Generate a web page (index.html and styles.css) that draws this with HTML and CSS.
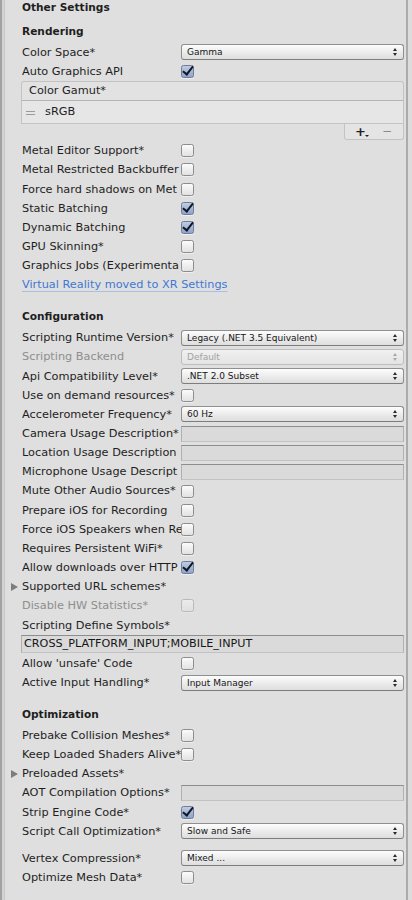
FILE: index.html
```html
<!DOCTYPE html>
<html>
<head>
<meta charset="utf-8">
<link rel="stylesheet" href="styles.css">
</head>
<body>
<div class="panel">
  <div class="edge-left"></div>
  <div class="content">
    <div class="title">Other Settings</div>

    <div class="section-head first">Rendering</div>
    <div class="row"><span class="label">Color Space*</span><div class="dropdown"><span>Gamma</span><i class="arrows"></i></div></div>
    <div class="row"><span class="label">Auto Graphics API</span><span class="check on"></span></div>

    <div class="list">
      <div class="list-head">Color Gamut*</div>
      <div class="list-body"><span class="handle"></span><span class="item">sRGB</span></div>
      <div class="list-foot"><span class="plus">+<i class="tri"></i></span><span class="minus">−</span></div>
    </div>

    <div class="row"><span class="label">Metal Editor Support*</span><span class="check"></span></div>
    <div class="row"><span class="label">Metal Restricted Backbuffer</span><span class="check"></span></div>
    <div class="row"><span class="label">Force hard shadows on Met</span><span class="check"></span></div>
    <div class="row"><span class="label">Static Batching</span><span class="check on"></span></div>
    <div class="row"><span class="label">Dynamic Batching</span><span class="check on"></span></div>
    <div class="row"><span class="label">GPU Skinning*</span><span class="check"></span></div>
    <div class="row"><span class="label">Graphics Jobs (Experimenta</span><span class="check"></span></div>
    <div class="row"><span class="link">Virtual Reality moved to XR Settings</span></div>

    <div class="section-head">Configuration</div>
    <div class="row"><span class="label">Scripting Runtime Version*</span><div class="dropdown"><span>Legacy (.NET 3.5 Equivalent)</span><i class="arrows"></i></div></div>
    <div class="row disabled"><span class="label">Scripting Backend</span><div class="dropdown"><span>Default</span><i class="arrows"></i></div></div>
    <div class="row"><span class="label">Api Compatibility Level*</span><div class="dropdown"><span>.NET 2.0 Subset</span><i class="arrows"></i></div></div>
    <div class="row"><span class="label">Use on demand resources*</span><span class="check"></span></div>
    <div class="row"><span class="label">Accelerometer Frequency*</span><div class="dropdown"><span>60 Hz</span><i class="arrows"></i></div></div>
    <div class="row"><span class="label">Camera Usage Description*</span><div class="field"></div></div>
    <div class="row"><span class="label">Location Usage Description</span><div class="field"></div></div>
    <div class="row"><span class="label">Microphone Usage Descript</span><div class="field"></div></div>
    <div class="row"><span class="label">Mute Other Audio Sources*</span><span class="check"></span></div>
    <div class="row"><span class="label">Prepare iOS for Recording</span><span class="check"></span></div>
    <div class="row"><span class="label">Force iOS Speakers when Re</span><span class="check"></span></div>
    <div class="row"><span class="label">Requires Persistent WiFi*</span><span class="check"></span></div>
    <div class="row"><span class="label">Allow downloads over HTTP</span><span class="check on"></span></div>
    <div class="row"><span class="label foldout">Supported URL schemes*</span></div>
    <div class="row disabled"><span class="label">Disable HW Statistics*</span><span class="check"></span></div>
    <div class="row"><span class="label">Scripting Define Symbols*</span></div>
    <div class="row wide"><div class="field full">CROSS_PLATFORM_INPUT;MOBILE_INPUT</div></div>
    <div class="row"><span class="label">Allow 'unsafe' Code</span><span class="check"></span></div>
    <div class="row"><span class="label">Active Input Handling*</span><div class="dropdown"><span>Input Manager</span><i class="arrows"></i></div></div>

    <div class="section-head">Optimization</div>
    <div class="row"><span class="label">Prebake Collision Meshes*</span><span class="check"></span></div>
    <div class="row"><span class="label">Keep Loaded Shaders Alive*</span><span class="check"></span></div>
    <div class="row"><span class="label foldout">Preloaded Assets*</span></div>
    <div class="row"><span class="label">AOT Compilation Options*</span><div class="field"></div></div>
    <div class="row"><span class="label">Strip Engine Code*</span><span class="check on"></span></div>
    <div class="row"><span class="label">Script Call Optimization*</span><div class="dropdown"><span>Slow and Safe</span><i class="arrows"></i></div></div>
    <div class="row spaced"><span class="label">Vertex Compression*</span><div class="dropdown"><span>Mixed ...</span><i class="arrows"></i></div></div>
    <div class="row"><span class="label">Optimize Mesh Data*</span><span class="check"></span></div>
  </div>
  <div class="edge-right"></div>
</div>
</body>
</html>
```

FILE: styles.css
```css
html, body {
  margin: 0;
  padding: 0;
  background: #dfdfdf;
}

body {
  font-family: "DejaVu Sans", "Liberation Sans", sans-serif;
  font-size: 11.3px;
  color: #1e1e1e;
}

.panel {
  display: flex;
  height: 900px;
  overflow: hidden;
  background: #dfdfdf;
}

.edge-left {
  width: 2px;
  flex: none;
  border-left: 2px solid #a2a2a2;
  border-right: 1px solid #c9c9c9;
  background: #d3d3d3;
}

.content {
  flex: none;
  width: 382px;
  padding-left: 17px;
  padding-right: 2px;
}

.edge-right {
  flex: none;
  width: 6px;
  border-left: 2px solid #ababab;
  background: #dcdcdc;
}

.title {
  font-weight: bold;
  font-size: 10.6px;
  height: 19.17px;
  line-height: 19.17px;
  margin-top: -2.1px;
}

.section-head {
  font-weight: bold;
  font-size: 10.6px;
  height: 19.17px;
  line-height: 19.17px;
  margin-top: 12.8px;
  margin-bottom: 1.8px;
}

.section-head.first {
  margin-top: 4.8px;
}

.row {
  display: grid;
  grid-template-columns: 159px 1fr;
  align-items: center;
  height: 19.17px;
}

.row.spaced {
  margin-top: 8px;
}

.label {
  display: block;
  width: 158.5px;
  white-space: nowrap;
  overflow: hidden;
  line-height: 19.17px;
}

.label.foldout {
  position: relative;
  overflow: visible;
}

.label.foldout::before {
  content: "";
  position: absolute;
  left: -11px;
  top: 5.5px;
  border-left: 7px solid #7d7d7d;
  border-top: 4.5px solid transparent;
  border-bottom: 4.5px solid transparent;
}

.disabled .label {
  color: #8e8e8e;
}

.link {
  grid-column: 1 / 3;
  color: #3f78d2;
  text-decoration: underline;
  text-decoration-color: #a9c0e6;
  text-underline-offset: 2.5px;
  line-height: 19.17px;
}

/* checkbox */
.check {
  position: relative;
  width: 11px;
  height: 11px;
  border: 1px solid #8d8d8d;
  border-radius: 2.5px;
  background: linear-gradient(#fbfbfb, #e2e2e2);
  box-shadow: 0 1px 0 rgba(255,255,255,0.5);
}

.check.on {
  border-color: #6e7d9c;
  background: linear-gradient(#c0cce2, #8fa3c8);
}

.check.on::after {
  content: "";
  position: absolute;
  left: 3.2px;
  top: -2px;
  width: 4px;
  height: 9px;
  border-right: 2.6px solid #101828;
  border-bottom: 2.6px solid #101828;
  transform: rotate(38deg);
}

.disabled .check {
  opacity: 0.45;
}

/* dropdown */
.dropdown {
  position: relative;
  height: 14px;
  border: 1px solid #8f8f8f;
  border-bottom-color: #7d7d7d;
  border-radius: 3px;
  background: linear-gradient(#fdfdfd, #e6e6e6 70%, #dedede);
  font-size: 9px;
  line-height: 14px;
  padding-left: 5px;
  color: #161616;
}

.disabled .dropdown {
  border-color: #bdbdbd;
  background: linear-gradient(#f0f0f0, #e4e4e4);
  color: #a3a3a3;
}

.arrows {
  position: absolute;
  right: 8px;
  top: 3px;
  width: 0;
  height: 8px;
}

.arrows::before,
.arrows::after {
  content: "";
  position: absolute;
  left: -2px;
  border-left: 2px solid transparent;
  border-right: 2px solid transparent;
}

.arrows::before {
  top: 0;
  border-bottom: 3px solid #2a2a2a;
}

.arrows::after {
  top: 5px;
  border-top: 3px solid #2a2a2a;
}

.disabled .arrows::before { border-bottom-color: #a9a9a9; }
.disabled .arrows::after { border-top-color: #a9a9a9; }

/* text fields */
.field {
  height: 14px;
  border: 1px solid #b0b0b0;
  border-top-color: #8d8d8d;
  border-bottom-color: #c2c2c2;
  background: #dadada;
}

.row.wide {
  grid-template-columns: 1fr;
}

.field.full {
  height: 16px;
  margin-left: -1px;
  padding-left: 2px;
  line-height: 16px;
  font-size: 11.2px;
  color: #161616;
}

/* reorderable list */
.list {
  display: flex;
  flex-direction: column;
  margin-top: 0;
  margin-bottom: 1.4px;
  margin-left: -1px;
}

.list-head {
  height: 18px;
  line-height: 18px;
  border: 1px solid #c3c3c3;
  border-bottom-color: #b5b5b5;
  border-radius: 3px 3px 0 0;
  background: #e2e2e2;
  padding-left: 7px;
}

.list-body {
  display: flex;
  align-items: center;
  height: 21.7px;
  border: 1px solid #c3c3c3;
  border-top: none;
  background: #e6e6e6;
}

.handle {
  width: 9px;
  height: 1px;
  margin-left: 4px;
  margin-right: 10px;
  margin-top: 3px;
  border-top: 1px solid #9b9b9b;
  border-bottom: 1px solid #9b9b9b;
  box-sizing: content-box;
  padding-top: 1px;
}

.item {
  line-height: 21px;
}

.list-foot {
  align-self: flex-end;
  display: flex;
  align-items: center;
  width: 58px;
  height: 15px;
  border: 1px solid #c3c3c3;
  border-top: none;
  border-radius: 0 0 3px 3px;
  background: #e4e4e4;
}

.plus {
  position: relative;
  margin-left: 10px;
  font-weight: bold;
  font-size: 13px;
  line-height: 13px;
  color: #222;
}

.tri {
  position: absolute;
  right: -3px;
  bottom: 1px;
  border-left: 2px solid transparent;
  border-right: 2px solid transparent;
  border-top: 2.5px solid #222;
}

.minus {
  margin-left: 16px;
  font-size: 12px;
  line-height: 13px;
  color: #8a8a8a;
}
```
